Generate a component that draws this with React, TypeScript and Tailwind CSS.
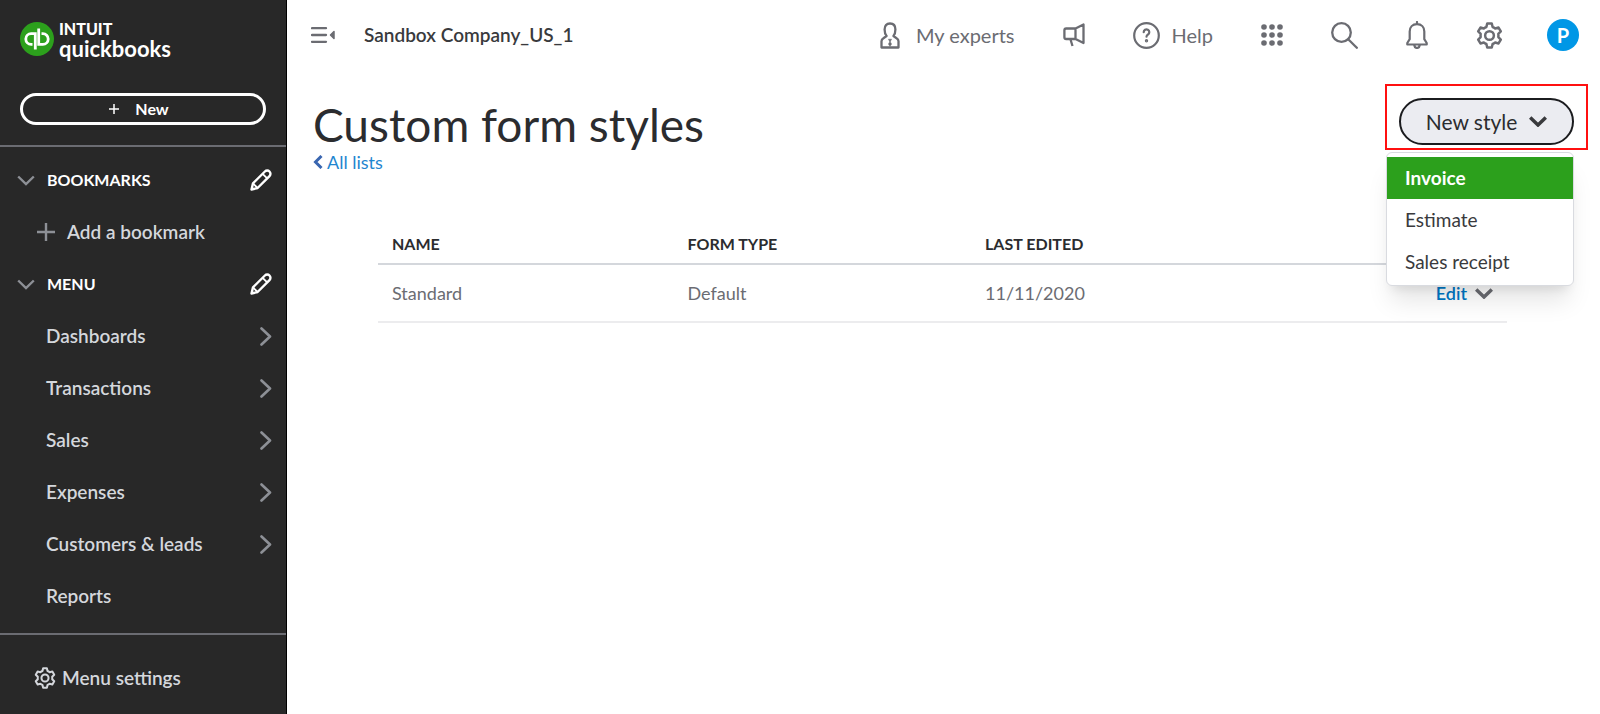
import { useState } from 'react';

type IconProps = { className?: string };

type FormStyle = {
  id: number;
  name: string;
  formType: string;
  lastEdited: string;
};

const menuItems = [
  { label: 'Dashboards', nested: true },
  { label: 'Transactions', nested: true },
  { label: 'Sales', nested: true },
  { label: 'Expenses', nested: true },
  { label: 'Customers & leads', nested: true },
  { label: 'Reports', nested: false },
];

const styleOptions = ['Invoice', 'Estimate', 'Sales receipt'];

const formStyles: FormStyle[] = [
  { id: 1, name: 'Standard', formType: 'Default', lastEdited: '11/11/2020' },
];

function ChevronDown({ className }: IconProps) {
  return (
    <svg viewBox="0 0 18 11" className={className} fill="none" stroke="currentColor" aria-hidden="true">
      <path d="M1.2 1.5 9 9l7.8-7.5" />
    </svg>
  );
}

function ChevronRight({ className }: IconProps) {
  return (
    <svg viewBox="0 0 12 19" className={className} fill="none" stroke="currentColor" strokeWidth="2.6" strokeLinecap="round" strokeLinejoin="round" aria-hidden="true">
      <path d="M1.5 1.5 10 9.5l-8.500 8" />
    </svg>
  );
}

function Pencil() {
  return (
    <svg viewBox="0 0 22 22" className="h-[22px] w-[22px]" fill="none" stroke="currentColor" strokeWidth="2.4" strokeLinejoin="round" aria-hidden="true">
      <path d="M1.5 20.5 3 14.4 14.9 2.5a3.200 3.200 0 0 1 4.600 4.600L7.600 19z" />
      <path d="M12.6 4.800 17.200 9.400M3 14.400 7.600 19" strokeWidth="1.8" />
    </svg>
  );
}

function Gear({ className }: IconProps) {
  return (
    <svg viewBox="0 0 26 26" className={className} fill="none" stroke="currentColor" strokeWidth="2.4" strokeLinejoin="round" aria-hidden="true">
      <path d="M10.800 1.500h4.400l.8 3.300a8.800 8.800 0 0 1 2.500 1.400l3.200-.9 2.200 3.800-2.400 2.400a9 9 0 0 1 0 3l2.400 2.400-2.200 3.800-3.200-.9a8.800 8.800 0 0 1-2.500 1.400l-.8 3.300h-4.400l-.8-3.300a8.800 8.800 0 0 1-2.500-1.400l-3.200.9-2.200-3.800 2.400-2.400a9 9 0 0 1 0-3L2.100 9.100l2.200-3.800 3.200.9A8.800 8.800 0 0 1 10 4.800z" />
      <circle cx="13" cy="13" r="4.200" />
    </svg>
  );
}

function Logo() {
  return (
    <a href="#" className="flex items-start gap-[5px] text-white">
      <svg viewBox="0 0 34 34" className="mt-px h-[34px] w-[34px] shrink-0" aria-hidden="true">
        <circle cx="17" cy="17" r="17" fill="#2ca01c" />
        <g fill="none" stroke="#fff" strokeWidth="2.8">
          <path d="M15.300 27.500V11.700h-4.200a5.300 5.300 0 0 0 0 10.600h1.400" />
          <path d="M18.700 6.500v15.800h4.200a5.300 5.300 0 0 0 0-10.600h-1.400" />
        </g>
      </svg>
      <span className="flex flex-col gap-[2px]">
        <span className="text-base leading-[15px] font-black">INTUIT</span>
        <span className="text-[22px] leading-[22px] font-bold">quickbooks</span>
      </span>
    </a>
  );
}

function SectionHeader({ title }: { title: string }) {
  return (
    <div className="flex h-[52px] items-center justify-between pr-[14px] pl-[17px]">
      <button type="button" className="flex items-center gap-3 text-base font-bold text-white">
        <ChevronDown className="h-[11px] w-[18px] stroke-[2.4] text-[#8d9096]" />
        {title}
      </button>
      <button type="button" aria-label={`Edit ${title.toLowerCase()}`} className="text-white">
        <Pencil />
      </button>
    </div>
  );
}

function Sidebar() {
  return (
    <aside className="flex w-[287px] shrink-0 flex-col border-r border-black bg-[#282828] text-[#d4d7dc]">
      <div className="border-b-2 border-[#6b6c72] px-5 pt-[21px] pb-5">
        <Logo />
        <button
          type="button"
          className="mt-[33px] flex h-8 w-full items-center justify-center gap-4 rounded-full border-[3px] border-white pr-2 text-base font-bold text-white"
        >
          <svg viewBox="0 0 10 10" className="h-[10px] w-[10px]" stroke="currentColor" strokeWidth="1.5" aria-hidden="true">
            <path d="M5 0v10M0 5h10" />
          </svg>
          New
        </button>
      </div>

      <nav className="pt-[7px] pb-[11px] text-[19px] font-semibold">
        <SectionHeader title="BOOKMARKS" />
        <button type="button" className="flex h-[52px] items-center gap-3 pl-[37px]">
          <svg viewBox="0 0 18 18" className="h-[18px] w-[18px] text-[#8d9096]" stroke="currentColor" strokeWidth="2.4" aria-hidden="true">
            <path d="M9 0v18M0 9h18" />
          </svg>
          Add a bookmark
        </button>
        <SectionHeader title="MENU" />
        <ul>
          {menuItems.map((item) => (
            <li key={item.label}>
              <a href="#" className="flex h-[52px] items-center justify-between pr-[14px] pl-[46px]">
                {item.label}
                {item.nested && <ChevronRight className="h-[19px] w-3 text-[#8d9096]" />}
              </a>
            </li>
          ))}
        </ul>
      </nav>

      <div className="flex-1 border-t-2 border-[#6b6c72] pt-[29px] pl-[34px]">
        <a href="#" className="flex items-center gap-[6px] text-[19px] font-semibold">
          <Gear className="h-[22px] w-[22px]" />
          Menu settings
        </a>
      </div>
    </aside>
  );
}

function TopBar() {
  return (
    <header className="flex h-[70px] items-center justify-between pr-[21px] pl-6 text-[#6b6c72]">
      <div className="flex items-center gap-[29px]">
        <button type="button" aria-label="Collapse menu">
          <svg viewBox="0 0 24 16" className="h-4 w-6" aria-hidden="true">
            <path d="M1 1.200h14M1 8h14M1 14.800h14" stroke="currentColor" strokeWidth="2.3" strokeLinecap="round" />
            <path d="M23 4.500v7L19.500 8z" fill="currentColor" stroke="currentColor" strokeWidth="1.5" strokeLinejoin="round" />
          </svg>
        </button>
        <span className="text-[19px] font-semibold text-[#393a3d]">Sandbox Company_US_1</span>
      </div>

      <div className="flex items-center gap-12 text-xl">
        <button type="button" className="flex items-center gap-4">
          <svg viewBox="0 0 20 27" className="h-[27px] w-5" fill="none" stroke="currentColor" strokeWidth="2.3" strokeLinejoin="round" aria-hidden="true">
            <path d="M6.600 14C5.200 12.500 4.600 10.500 4.600 7.500 4.600 3.300 6.500 1.500 10 1.500s5.400 1.800 5.400 6c0 3-.6 5-2 6.500l3.200 2.200c1.200.7 1.900 1.500 1.900 3V25.500H1.500V19.200c0-1.500.7-2.300 1.900-3z" />
            <path d="M8.400 17.200h3.200L10 20zM10 19.400l1.600 2.600L10 24.500 8.400 22z" fill="currentColor" strokeWidth=".5" />
          </svg>
          My experts
        </button>
        <button type="button" aria-label="Announcements">
          <svg viewBox="0 0 22 24" className="h-6 w-[22px]" fill="none" stroke="currentColor" strokeWidth="2.3" strokeLinejoin="round" aria-hidden="true">
            <path d="M12.500 5.500H3.200A1.800 1.800 0 0 0 1.400 7.300v6.900A1.800 1.800 0 0 0 3.200 16h9.300zM12.500 5.500 20.500 1.500V20L12.500 16M7.500 16.500l2 6.500" />
          </svg>
        </button>
        <button type="button" className="flex items-center gap-3">
          <svg viewBox="0 0 27 27" className="h-[27px] w-[27px]" fill="none" stroke="currentColor" strokeWidth="2.2" strokeLinecap="round" aria-hidden="true">
            <circle cx="13.500" cy="13.500" r="12.300" />
            <path d="M10.700 10.200a2.800 2.800 0 1 1 4.300 2.300c-1 .6-1.500 1.100-1.500 2.200" />
            <circle cx="13.500" cy="18.700" r=".6" fill="currentColor" />
          </svg>
          Help
        </button>
        <button type="button" aria-label="Apps">
          <svg viewBox="0 0 22 22" className="h-[22px] w-[22px]" fill="currentColor" aria-hidden="true">
            {[3, 11, 19].map((cy) => [3, 11, 19].map((cx) => <circle key={`${cx}-${cy}`} cx={cx} cy={cy} r="2.8" />))}
          </svg>
        </button>
        <button type="button" aria-label="Search">
          <svg viewBox="0 0 27 27" className="h-[27px] w-[27px]" fill="none" stroke="currentColor" strokeWidth="2.3" strokeLinecap="round" aria-hidden="true">
            <circle cx="10.500" cy="10.500" r="9.300" />
            <path d="M17.200 17.200 25.800 25.800" />
          </svg>
        </button>
        <button type="button" aria-label="Notifications">
          <svg viewBox="0 0 22 28" className="h-7 w-[22px]" fill="none" stroke="currentColor" strokeWidth="2.2" strokeLinejoin="round" strokeLinecap="round" aria-hidden="true">
            <path d="M11 1v2M11 3.200c-4.500 0-7.300 3-7.300 7.300v7.700L1.300 22v1.500h19.400V22l-2.400-3.800v-7.700c0-4.300-2.800-7.300-7.300-7.300zM8.200 24c.3 2 1.300 3 2.800 3s2.500-1 2.800-3" />
          </svg>
        </button>
        <button type="button" aria-label="Settings">
          <Gear className="h-[27px] w-[27px]" />
        </button>
        <button
          type="button"
          className="-ml-1 flex h-8 w-8 items-center justify-center rounded-full bg-[#0097e6] text-xl font-bold text-white"
        >
          P
        </button>
      </div>
    </header>
  );
}

function NewStyleMenu() {
  const [open, setOpen] = useState(true);
  const [active, setActive] = useState('Invoice');

  return (
    <div className="relative mt-[14px] border-2 border-[#ff1010] px-3 pt-3 pb-[3px]">
      <button
        type="button"
        aria-expanded={open}
        onClick={() => setOpen(!open)}
        className="flex h-[47px] w-[175px] items-center justify-center gap-3 rounded-full border-2 border-[#1b1c1f] bg-[#ebecf1] text-[21px] text-[#2b2c2f]"
      >
        New style
        <ChevronDown className="h-[11px] w-[18px] stroke-[3.5] text-[#393a3d]" />
      </button>
      {open && (
        <ul className="absolute top-full right-3 z-10 mt-1 w-[188px] rounded-md border border-[#d9dbe0] bg-white pt-1 pb-[2px] text-[19px] text-[#393a3d] shadow-xl">
          {styleOptions.map((option) => (
            <li key={option}>
              <button
                type="button"
                onMouseEnter={() => setActive(option)}
                className={
                  option === active
                    ? 'flex h-[42px] w-full items-center bg-[#2ca01c] pl-[18px] font-bold text-white'
                    : 'flex h-[42px] w-full items-center pl-[18px]'
                }
              >
                {option}
              </button>
            </li>
          ))}
        </ul>
      )}
    </div>
  );
}

export default function App() {
  return (
    <div className="flex min-h-screen bg-white font-['Lato','Open_Sans',sans-serif]">
      <Sidebar />

      <div className="min-w-0 flex-1">
        <TopBar />

        <main>
          <div className="flex items-start justify-between pr-3 pl-[26px]">
            <div className="pt-[30px]">
              <h1 className="text-[46px] leading-[50px] text-[#2b2c2f]">Custom form styles</h1>
              <a href="#" className="flex items-center gap-1 text-lg leading-6 text-[#1f86d0]">
                <svg viewBox="0 0 10 14" className="h-[14px] w-[10px] text-[#3a66b0]" fill="none" stroke="currentColor" strokeWidth="3" aria-hidden="true">
                  <path d="M8.5 1 2.5 7l6 6" />
                </svg>
                All lists
              </a>
            </div>
            <NewStyleMenu />
          </div>

          <div className="pt-[50px] pr-[93px] pl-[91px]">
            <table className="w-full table-fixed text-left">
              <thead>
                <tr className="h-10 border-b-2 border-[#d4d7dc] text-base text-[#2b2c2f]">
                  <th className="w-[26%] pl-[14px] font-bold">NAME</th>
                  <th className="w-[26%] pl-4 font-bold">FORM TYPE</th>
                  <th className="w-[26%] pl-5 font-bold">LAST EDITED</th>
                  <th aria-label="Action" />
                </tr>
              </thead>
              <tbody>
                {formStyles.map((row) => (
                  <tr key={row.id} className="h-[58px] border-b-2 border-[#ececee] text-lg text-[#6b6c72]">
                    <td className="pl-[14px]">{row.name}</td>
                    <td className="pl-4">{row.formType}</td>
                    <td className="pl-5">{row.lastEdited}</td>
                    <td className="pr-[14px]">
                      <div className="flex items-center justify-end gap-2">
                        <a href="#" className="font-semibold text-[#0077c5]">Edit</a>
                        <button type="button" aria-label="More actions">
                          <ChevronDown className="h-[11px] w-[18px] stroke-[3.5]" />
                        </button>
                      </div>
                    </td>
                  </tr>
                ))}
              </tbody>
            </table>
          </div>
        </main>
      </div>
    </div>
  );
}
